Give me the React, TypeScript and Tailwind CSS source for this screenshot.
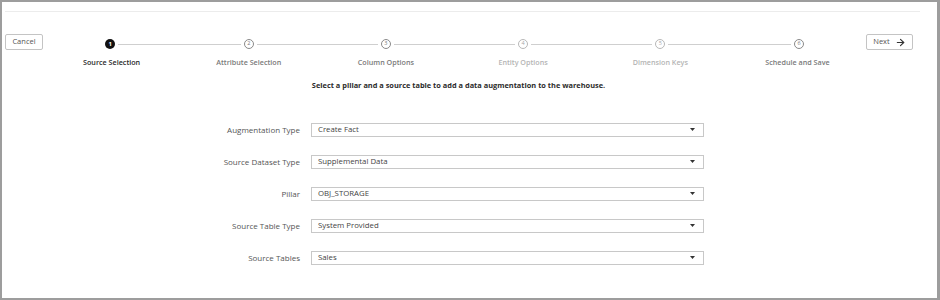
import { ArrowRight } from 'lucide-react';

const steps = [
  { n: 1, label: 'Source Selection', tone: 'active' },
  { n: 2, label: 'Attribute Selection', tone: 'done' },
  { n: 3, label: 'Column Options', tone: 'done' },
  { n: 4, label: 'Entity Options', tone: 'muted' },
  { n: 5, label: 'Dimension Keys', tone: 'muted' },
  { n: 6, label: 'Schedule and Save', tone: 'done' },
];

const fields = [
  { label: 'Augmentation Type', value: 'Create Fact' },
  { label: 'Source Dataset Type', value: 'Supplemental Data' },
  { label: 'Pillar', value: 'OBJ_STORAGE' },
  { label: 'Source Table Type', value: 'System Provided' },
  { label: 'Source Tables', value: 'Sales' },
];

function Step({ n, label, tone, first, last }: { n: number; label: string; tone: string; first: boolean; last: boolean }) {
  const labelColor =
    tone === 'active' ? 'text-[#2a2a2a]' : tone === 'done' ? 'text-[#7a7a7a]' : 'text-[#b4b4b4]';
  return (
    <div className="flex flex-1 flex-col items-center">
      <div className="flex w-full items-center">
        <div className={`h-px flex-1 ${first ? '' : 'mr-[3px] bg-[#cfcfcf]'}`} />
        {tone === 'active' ? (
          <div className="flex h-[10px] w-[10px] items-center justify-center rounded-full bg-[#111] text-[6px] font-bold leading-none text-white">
            {n}
          </div>
        ) : (
          <div
            className={`flex h-[10px] w-[10px] items-center justify-center rounded-full border text-[5.5px] leading-none ${
              tone === 'muted' ? 'border-[#b8b8b8] text-[#a8a8a8]' : 'border-[#8a8a8a] text-[#777]'
            }`}
          >
            {n}
          </div>
        )}
        <div className={`h-px flex-1 ${last ? '' : 'ml-[3px] bg-[#cfcfcf]'}`} />
      </div>
      <div className={`mt-[10px] whitespace-nowrap text-[7.2px] font-semibold leading-none ${labelColor}`}>{label}</div>
    </div>
  );
}

export default function App() {
  return (
    <div
      className="h-[300px] w-[940px] overflow-hidden border-2 border-r-[3px] border-[#9d9d9d] bg-white"
      style={{ fontFamily: '"Open Sans", "Noto Sans", sans-serif' }}
    >
      <div className="ml-[3px] mr-[17px] mt-[9px] h-px bg-[#ececec]" />

      <div className="mt-[22px] flex items-start pl-[3px] pr-[24px]">
        <button className="h-[16px] w-[38px] rounded-[2px] border border-[#c4c4c4] text-[7.5px] leading-none text-[#555]">
          Cancel
        </button>
        <div className="mt-[5px] flex flex-1">
          {steps.map((s, i) => (
            <Step key={s.n} {...s} first={i === 0} last={i === steps.length - 1} />
          ))}
        </div>
        <button className="flex h-[16px] w-[47px] items-center justify-center gap-[5px] rounded-[2px] border border-[#c4c4c4] text-[7.5px] leading-none text-[#555]">
          Next
          <ArrowRight className="h-[11px] w-[11px] text-[#333]" strokeWidth={2.4} />
        </button>
      </div>

      <div className="mt-[16px] pr-[22px] text-center text-[7.4px] font-bold leading-none text-[#2b2b2b]">
        Select a pillar and a source table to add a data augmentation to the warehouse.
      </div>

      <div className="mt-[33px] flex flex-col gap-[18px]">
        {fields.map((f) => (
          <div key={f.label} className="flex items-center">
            <div className="w-[298px] text-right text-[8px] leading-none text-[#555]">{f.label}</div>
            <div className="ml-[11px] flex h-[14px] w-[393px] items-center justify-between border border-[#c8c8c8] pl-[6px] pr-[8px]">
              <span className="text-[7.8px] leading-none text-[#444]">{f.value}</span>
              <svg width="5" height="3" viewBox="0 0 5 3">
                <path d="M0 0 L5 0 L2.5 3 Z" fill="#333" />
              </svg>
            </div>
          </div>
        ))}
      </div>
    </div>
  );
}
